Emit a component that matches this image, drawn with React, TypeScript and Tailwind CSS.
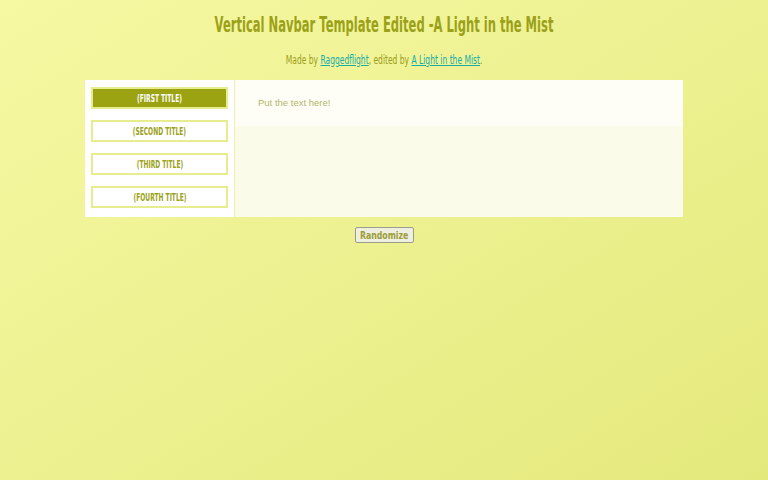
import React, { useState } from "react";

const sans = { fontFamily: '"DejaVu Sans", "Liberation Sans", sans-serif' };

const titles = ["(FIRST TITLE)", "(SECOND TITLE)", "(THIRD TITLE)", "(FOURTH TITLE)"];

// Narrow display lettering: squeeze a run of text horizontally around its centre.
function Narrow({ className, children }: { className: string; children: React.ReactNode }) {
  return <span className={"inline-block whitespace-nowrap origin-center " + className}>{children}</span>;
}

export default function App() {
  const [active, setActive] = useState(0);
  return (
    <div
      className="min-h-[480px] w-full bg-gradient-to-br from-[#f6f8a2] to-[#e4e97c] flex flex-col items-center"
      style={sans}
    >
      <h1 className="mt-[11px] h-[28px] flex justify-center text-[21px] leading-[28px] font-bold text-[#9ba118]">
        <Narrow className="scale-x-[0.55]">Vertical Navbar Template Edited -A Light in the Mist</Narrow>
      </h1>
      <p className="mt-[14px] h-[14px] flex justify-center text-[12px] leading-[14px] text-[#9a9d20]">
        <Narrow className="scale-x-[0.63]">
          Made by{" "}
          <a href="#" className="text-[#17aca6] underline">
            Raggedflight
          </a>
          , edited by{" "}
          <a href="#" className="text-[#17aca6] underline">
            A Light in the Mist
          </a>
          .
        </Narrow>
      </p>
      <div className="mt-[13px] w-[598px] h-[137px] flex bg-white">
        <nav className="w-[150px] flex flex-col gap-[11px] px-[6px] pt-[7px] border-r border-[#eef1b0]">
          {titles.map((t, i) => (
            <button
              key={t}
              onClick={() => setActive(i)}
              className={
                "h-[22px] w-[137px] flex items-center justify-center border-2 border-[#e7ec8e] text-[11px] font-bold leading-none " +
                (i === active ? "bg-[#9ba312] text-white" : "bg-white text-[#9ba118]")
              }
            >
              <Narrow className="scale-x-[0.54]">{t}</Narrow>
            </button>
          ))}
        </nav>
        <div className="flex-1 flex flex-col">
          <div className="h-[46px] bg-[#fefef6] pl-[23px] pt-[9px]">
            <span
              className="text-[9.5px] leading-[14px] text-[#b4b66c]"
              style={{ fontFamily: '"Liberation Sans", Arial, sans-serif' }}
            >
              Put the text here!
            </span>
          </div>
          <div className="flex-1 bg-gradient-to-r from-[#fafbe8] to-[#fbfbe9]" />
        </div>
      </div>
      <button className="mt-[10px] h-[16px] w-[59px] flex items-center justify-center text-[11px] leading-none font-bold text-[#9a9d3a] bg-[#efefdf] border border-[#9c9c8a] rounded-[2px]">
        <Narrow className="scale-x-[0.71]">Randomize</Narrow>
      </button>
    </div>
  );
}
